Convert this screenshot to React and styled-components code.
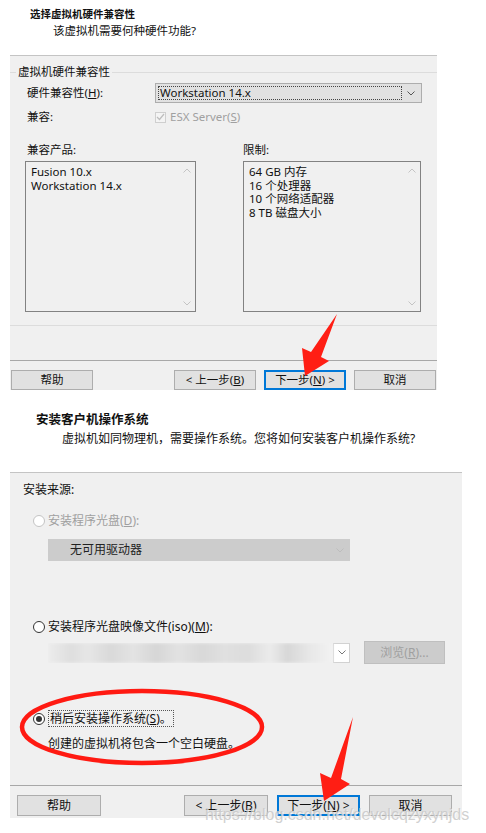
import React from 'react';
import styled, { createGlobalStyle } from 'styled-components';

const GlobalStyle = createGlobalStyle`
  body {
    margin: 0;
    background: #fff;
  }
  * {
    box-sizing: border-box;
  }
`;

const FONT = `"Noto Sans", "Noto Sans CJK SC", sans-serif`;

const Page = styled.div`
  position: relative;
  width: 486px;
  height: 833px;
  overflow: hidden;
  font-family: ${FONT};
  color: #111;
`;

const Header = styled.div`
  height: ${p => p.$h}px;
  padding: ${p => p.$pt}px 0 0 ${p => p.$pl}px;
  background: #fff;
`;

const Title = styled.div`
  font-weight: 700;
  font-size: ${p => p.$size}px;
  line-height: 14px;
  white-space: nowrap;
`;

const Subtitle = styled.div`
  font-size: ${p => p.$size}px;
  line-height: 14px;
  margin-top: ${p => p.$mt}px;
  padding-left: ${p => p.$indent}px;
  white-space: nowrap;
`;

const Panel = styled.div`
  margin-left: 10px;
  width: ${p => p.$w}px;
  height: ${p => p.$h}px;
  background: #f0f0f0;
  border-top: 1px solid #c4c4c4;
  display: flex;
  flex-direction: column;
  font-size: ${p => p.$size}px;
`;

/* ---------- group box ---------- */

const GroupHead = styled.div`
  margin-top: 9px;
  height: 14px;
  display: flex;
  align-items: center;
  line-height: 14px;
  &::before {
    content: '';
    width: 6px;
    border-top: 1px solid #dcdcdc;
  }
  &::after {
    content: '';
    flex: 1;
    border-top: 1px solid #dcdcdc;
  }
`;

const GroupLabel = styled.span`
  padding: 0 2px;
`;

const GroupBody = styled.div`
  border-bottom: 1px solid #dcdcdc;
  padding-bottom: 13px;
`;

const FieldRow = styled.div`
  display: flex;
  align-items: center;
  height: ${p => p.$h}px;
  margin-top: ${p => p.$mt}px;
  padding-left: 17px;
`;

const FieldLabel = styled.span`
  width: 128px;
  line-height: 14px;
`;

const Combo = styled.div`
  width: 267px;
  height: 20px;
  background: #e1e1e1;
  border: 1px solid #adadad;
  display: flex;
  align-items: center;
  padding: 2px;
`;

const ComboFocus = styled.div`
  flex: 1;
  height: 100%;
  border: 1px dotted #444;
  display: flex;
  align-items: center;
  padding-left: 1px;
  line-height: 14px;
`;

const ComboArrow = styled.div`
  width: 17px;
  display: flex;
  justify-content: center;
  align-items: center;
`;

const CheckBox = styled.span`
  width: 11px;
  height: 11px;
  border: 1px solid #cfcfcf;
  background: #f4f4f4;
  display: flex;
  align-items: center;
  justify-content: center;
  margin-right: 4px;
`;

const Muted = styled.span`
  color: #a0a0a0;
  line-height: 14px;
`;

const Columns = styled.div`
  display: flex;
  gap: 47px;
  margin-top: 18px;
  padding-left: 15px;
`;

const Column = styled.div`
  display: flex;
  flex-direction: column;
`;

const ColLabel = styled.div`
  line-height: 14px;
  padding-left: ${p => p.$indent || 0}px;
`;

const ListBox = styled.div`
  margin-top: 4px;
  width: ${p => p.$w}px;
  height: 151px;
  border: 1px solid #828282;
  background: #f0f0f0;
  display: flex;
`;

const ListItems = styled.div`
  flex: 1;
  padding: 3px 0 0 5px;
  line-height: 13.5px;
  white-space: nowrap;
`;

const ScrollCol = styled.div`
  width: 16px;
  display: flex;
  flex-direction: column;
  justify-content: space-between;
  align-items: center;
  padding: 6px 0 5px;
`;

/* ---------- footer ---------- */

const Footer = styled.div`
  margin-top: auto;
  border-top: 1px solid #a8a8a8;
  display: flex;
  align-items: flex-start;
  padding: 9px ${p => p.$pr}px ${p => p.$pb}px ${p => p.$pl}px;
`;

const ButtonGroup = styled.div`
  margin-left: auto;
  display: flex;
  gap: ${p => p.$gap}px;
`;

const Button = styled.button`
  width: ${p => p.$w}px;
  height: ${p => p.$h}px;
  padding: 0;
  font-family: inherit;
  font-size: inherit;
  line-height: 14px;
  color: ${p => (p.$disabled ? '#a0a0a0' : '#111')};
  background: ${p => (p.$disabled ? '#cccccc' : '#e1e1e1')};
  border: 1px solid ${p => (p.$primary ? '#0078d7' : p.$disabled ? '#bfbfbf' : '#adadad')};
  box-shadow: ${p => (p.$primary ? 'inset 0 0 0 1px #0078d7' : 'none')};
  display: flex;
  align-items: center;
  justify-content: center;
  white-space: nowrap;
`;

/* ---------- install source ---------- */

const SourceLabel = styled.div`
  margin-top: 10px;
  padding-left: 13px;
  line-height: 14px;
`;

const RadioRow = styled.div`
  display: flex;
  align-items: center;
  height: ${p => p.$h}px;
  margin-top: ${p => p.$mt}px;
  padding-left: 23px;
  color: ${p => (p.$disabled ? '#a0a0a0' : '#111')};
  line-height: 14px;
`;

const Radio = styled.span`
  width: 12px;
  height: 12px;
  border-radius: 50%;
  border: 1px solid ${p => (p.$disabled ? '#c4c4c4' : '#333')};
  background: #fff;
  margin-right: 3px;
  display: flex;
  align-items: center;
  justify-content: center;
  &::after {
    content: '';
    width: 6px;
    height: 6px;
    border-radius: 50%;
    background: ${p => (p.$checked ? '#333' : 'transparent')};
  }
`;

const FocusLabel = styled.span`
  border: 1px dotted #555;
  padding: 0 1px;
  height: 17px;
  display: flex;
  align-items: center;
`;

const DisabledCombo = styled.div`
  margin: 10px 0 0 38px;
  width: 302px;
  height: 22px;
  background: #cccccc;
  display: flex;
  align-items: center;
  padding-left: 22px;
  color: #222;
  line-height: 14px;
  & > svg {
    margin-left: auto;
    margin-right: 6px;
  }
`;

const IsoRow = styled.div`
  margin-top: 6px;
  padding-left: 38px;
  height: 23px;
  display: flex;
  align-items: center;
  gap: 14px;
`;

const BlurField = styled.div`
  width: 302px;
  height: 20px;
  display: flex;
  overflow: hidden;
`;

const BlurFill = styled.div`
  flex: 1;
  background: linear-gradient(
    90deg,
    #ececec 0%,
    #dedede 8%,
    #e6e6e6 14%,
    #d9d9d9 22%,
    #e3e3e3 30%,
    #d6d6d6 38%,
    #e2e2e2 46%,
    #d8d8d8 54%,
    #e0e0e0 62%,
    #dcdcdc 70%,
    #ebebeb 78%,
    #d7d7d7 84%,
    #e8e8e8 92%,
    #f2f2f2 100%
  );
  filter: blur(1.5px);
`;

const BlurArrow = styled.div`
  width: 17px;
  background: #fff;
  border: 1px solid #d2d2d2;
  display: flex;
  align-items: center;
  justify-content: center;
`;

const Desc = styled.div`
  margin-top: 10px;
  padding-left: 38px;
  line-height: 14px;
`;

/* ---------- annotations ---------- */

const Overlay = styled.svg`
  position: absolute;
  left: 0;
  top: 0;
  pointer-events: none;
`;

const Watermark = styled.div`
  position: absolute;
  left: 205px;
  top: 806px;
  font-family: 'Liberation Sans', Arial, sans-serif;
  font-size: 16px;
  line-height: 18px;
  color: rgba(200, 200, 200, 0.85);
  text-shadow: 1px 1px 0 rgba(255, 255, 255, 0.7);
  white-space: nowrap;
  pointer-events: none;
`;

const Chevron = ({ up, color = '#555' }) => (
  <svg width="8" height="5" viewBox="0 0 8 5">
    <polyline
      points={up ? '0.5,4.5 4,1 7.5,4.5' : '0.5,0.5 4,4 7.5,0.5'}
      fill="none"
      stroke={color}
      strokeWidth="1"
    />
  </svg>
);

const Check = () => (
  <svg width="9" height="8" viewBox="0 0 9 8">
    <polyline points="1,4 3.5,6.5 8,1" fill="none" stroke="#bdbdbd" strokeWidth="1.2" />
  </svg>
);

const ListBoxView = ({ width, items }) => (
  <ListBox $w={width}>
    <ListItems>
      {items.map(item => (
        <div key={item}>{item}</div>
      ))}
    </ListItems>
    <ScrollCol>
      <Chevron up color="#c4c4c4" />
      <Chevron color="#c4c4c4" />
    </ScrollCol>
  </ListBox>
);

export default function App() {
  return (
    <Page>
      <GlobalStyle />

      {/* 1: hardware compatibility */}
      <Header $h={55} $pt={7} $pl={30}>
        <Title $size={10.5}>选择虚拟机硬件兼容性</Title>
        <Subtitle $size={11.5} $mt={3} $indent={23}>
          该虚拟机需要何种硬件功能?
        </Subtitle>
      </Header>
      <Panel $w={427} $h={335} $size={11.5}>
        <GroupHead>
          <GroupLabel>虚拟机硬件兼容性</GroupLabel>
        </GroupHead>
        <GroupBody>
          <FieldRow $h={20} $mt={4}>
            <FieldLabel>
              硬件兼容性(<u>H</u>):
            </FieldLabel>
            <Combo>
              <ComboFocus>Workstation 14.x</ComboFocus>
              <ComboArrow>
                <Chevron />
              </ComboArrow>
            </Combo>
          </FieldRow>
          <FieldRow $h={16} $mt={6}>
            <FieldLabel>兼容:</FieldLabel>
            <CheckBox>
              <Check />
            </CheckBox>
            <Muted>
              ESX Server(<u>S</u>)
            </Muted>
          </FieldRow>
          <Columns>
            <Column>
              <ColLabel $indent={2}>兼容产品:</ColLabel>
              <ListBoxView width={171} items={['Fusion 10.x', 'Workstation 14.x']} />
            </Column>
            <Column>
              <ColLabel>限制:</ColLabel>
              <ListBoxView
                width={178}
                items={['64 GB 内存', '16 个处理器', '10 个网络适配器', '8 TB 磁盘大小']}
              />
            </Column>
          </Columns>
        </GroupBody>
        <Footer $pl={1} $pr={1} $pb={0}>
          <Button $w={82} $h={20}>帮助</Button>
          <ButtonGroup $gap={8}>
            <Button $w={82} $h={20}>
              &lt; 上一步(<u>B</u>)
            </Button>
            <Button $w={82} $h={20} $primary>
              下一步(<u>N</u>) &gt;
            </Button>
            <Button $w={82} $h={20}>取消</Button>
          </ButtonGroup>
        </Footer>
      </Panel>

      {/* 2: guest OS install */}
      <Header $h={82} $pt={23} $pl={36}>
        <Title $size={12.5}>安装客户机操作系统</Title>
        <Subtitle $size={12} $mt={5} $indent={26}>
          虚拟机如同物理机，需要操作系统。您将如何安装客户机操作系统?
        </Subtitle>
      </Header>
      <Panel $w={452} $h={346} $size={12}>
        <SourceLabel>安装来源:</SourceLabel>
        <RadioRow $h={16} $mt={16} $disabled>
          <Radio $disabled />
          安装程序光盘(<u>D</u>):
        </RadioRow>
        <DisabledCombo>
          无可用驱动器
          <Chevron color="#bdbdbd" />
        </DisabledCombo>
        <RadioRow $h={16} $mt={58}>
          <Radio />
          安装程序光盘映像文件(iso)(<u>M</u>):
        </RadioRow>
        <IsoRow>
          <BlurField>
            <BlurFill />
            <BlurArrow>
              <Chevron color="#777" />
            </BlurArrow>
          </BlurField>
          <Button $w={81} $h={23} $disabled>
            浏览(<u>R</u>)...
          </Button>
        </IsoRow>
        <RadioRow $h={17} $mt={46}>
          <Radio $checked />
          <FocusLabel>
            稍后安装操作系统(<u>S</u>)。
          </FocusLabel>
        </RadioRow>
        <Desc>创建的虚拟机将包含一个空白硬盘。</Desc>
        <Footer $pl={7} $pr={10} $pb={2}>
          <Button $w={84} $h={21}>帮助</Button>
          <ButtonGroup $gap={9}>
            <Button $w={84} $h={21}>
              &lt; 上一步(<u>B</u>)
            </Button>
            <Button $w={83} $h={21} $primary>
              下一步(<u>N</u>) &gt;
            </Button>
            <Button $w={83} $h={21}>取消</Button>
          </ButtonGroup>
        </Footer>
      </Panel>

      {/* red annotations */}
      <Overlay width="486" height="833" viewBox="0 0 486 833">
        <polygon
          points="337,314 321,357 329,361 305,376 302,348 311,352"
          fill="#ff1e14"
        />
        <ellipse cx="142" cy="727" rx="120" ry="36" fill="none" stroke="#ff1a12" strokeWidth="4.5" />
        <polygon
          points="353,717 341,779 350,784 324,801 320,773 331,778"
          fill="#ff1e14"
        />
      </Overlay>
      <Watermark>https://blog.csdn.net/devolcqzyxynjds</Watermark>
    </Page>
  );
}
